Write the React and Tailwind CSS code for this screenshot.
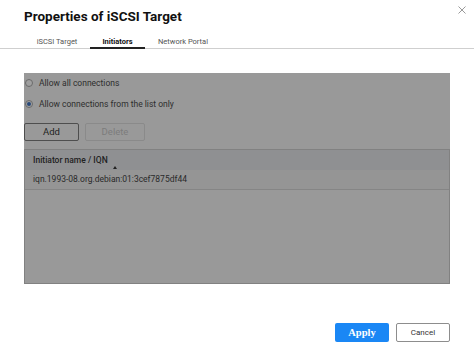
import React from "react";

const font = { fontFamily: "Roboto, 'Liberation Sans', sans-serif" };

const Radio = ({ checked, label }) => (
  <div className="flex items-center h-[20px] pl-[1px]">
    <span className="w-[8px] h-[8px] rounded-full border border-[#6a6a6a] bg-[#a0a0a0] flex items-center justify-center">
      {checked && <span className="w-[4px] h-[4px] rounded-full bg-[#2a4a7a]" />}
    </span>
    <span className="ml-[6px] text-[8.5px] text-[#2e2e2e]">{label}</span>
  </div>
);

export default function App() {
  return (
    <div className="w-[474px] h-[358px] bg-white relative flex flex-col" style={font}>
      <button className="absolute right-[6px] top-[4px] w-[12px] h-[12px] text-[#9a9a9a]">
        <svg viewBox="0 0 12 12" className="w-[12px] h-[12px]">
          <path d="M2.5 2.5 L9.5 9.5 M9.5 2.5 L2.5 9.5" stroke="currentColor" strokeWidth="1" />
        </svg>
      </button>

      <h1 className="px-[24px] mt-[6px] leading-[20px] text-[13.5px] font-bold text-[#111]">
        Properties of iSCSI Target
      </h1>

      <div className="mt-[7px] flex border-b border-[#cfcfcf] pl-[24px] text-[7.5px] h-[16px]">
        <div className="w-[66px] flex justify-center items-center pt-[3px] text-[#555]">iSCSI Target</div>
        <div className="w-[55px] flex justify-center items-center pt-[3px] font-bold text-[#111] border-b-2 border-[#222] -mb-px">
          Initiators
        </div>
        <div className="w-[76px] flex justify-center items-center pt-[3px] text-[#555]">Network Portal</div>
      </div>

      <div className="mx-[24px] mt-[24px] h-[211px] bg-[#999999] flex flex-col">
        <div className="flex flex-col">
          <Radio label="Allow all connections" />
          <div className="h-[1px]" />
          <Radio checked label="Allow connections from the list only" />
        </div>
        <div className="flex gap-[6px] mt-[9px]">
          <button className="w-[55px] h-[18px] rounded-[2px] border border-[#4e4e4e] text-[9.5px] text-[#222]">
            Add
          </button>
          <button className="w-[60px] h-[18px] rounded-[2px] border border-[#8a8a8a] text-[9.5px] text-[#7c7c7c]">
            Delete
          </button>
        </div>
        <div className="mt-[8px] flex-1 flex flex-col border-x border-b border-t border-[#818181]">
          <div className="h-[20px] bg-[#8f9092] flex items-center pl-[8px] relative text-[8.5px] font-medium text-[#222]">
            Initiator name / IQN
            <span className="absolute left-[88px] top-[16px] w-0 h-0 border-x-[2px] border-x-transparent border-b-[3px] border-b-[#222]" />
          </div>
          <div className="h-[20px] bg-[#959595] border-b border-[#858585] flex items-center pl-[8px] text-[8.5px] text-[#2a2a2a]">
            iqn.1993-08.org.debian:01:3cef7875df44
          </div>
          <div className="flex-1" />
        </div>
      </div>

      <div className="flex-1 flex items-end justify-end gap-[7px] pr-[24px] pb-[16px]">
        <button
          className="w-[54px] h-[19px] rounded-[2px] bg-[#1a87f5] text-white text-[10.5px] font-bold"
          style={{ fontFamily: "'Liberation Serif', serif" }}
        >
          Apply
        </button>
        <button className="w-[54px] h-[19px] rounded-[2px] border border-[#8d8d8d] bg-white text-[8px] text-[#333]">
          Cancel
        </button>
      </div>
    </div>
  );
}
